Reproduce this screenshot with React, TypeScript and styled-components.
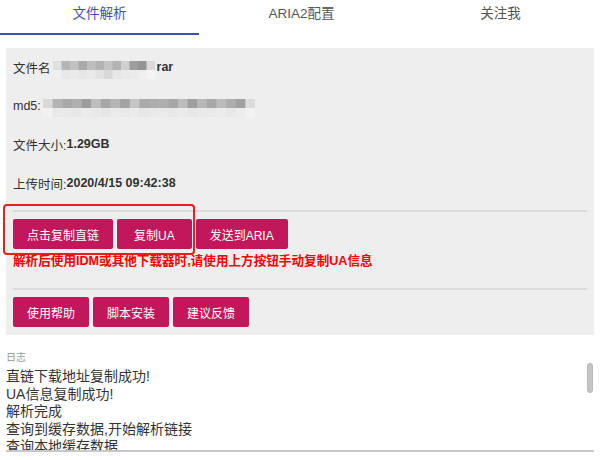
import React from 'react'
import styled, { createGlobalStyle } from 'styled-components'

const GlobalStyle = createGlobalStyle`
  html, body {
    margin: 0;
    padding: 0;
    background: #fff;
  }
  body {
    font-family: "Liberation Sans", "Noto Sans CJK SC", sans-serif;
    color: #333;
  }
`

const Page = styled.div`
  width: 600px;
  height: 460px;
  overflow: hidden;
`

const Tabs = styled.nav`
  display: flex;
  height: 35px;
`

const Tab = styled.div<{ $active?: boolean }>`
  flex: 1;
  display: flex;
  justify-content: center;
  padding-top: 2px;
  box-sizing: border-box;
  font-size: 13.5px;
  color: ${(p) => (p.$active ? '#3f51b5' : '#555')};
  border-bottom: 2px solid ${(p) => (p.$active ? '#3f51b5' : 'transparent')};
  margin-right: ${(p) => (p.$active ? '3px' : '0')};
`

const Panel = styled.section`
  margin: 13px 6px 0;
  padding: 0 7px 8px;
  background: #eeeeee;
`

const InfoRow = styled.div`
  height: 38.6px;
  display: flex;
  align-items: center;
  font-size: 12.5px;
  color: #333;

  b {
    font-weight: bold;
  }
`

const Divider = styled.hr<{ $top: number }>`
  margin: ${(p) => p.$top}px 0 0;
  border: none;
  border-top: 2px solid #dcdcdc;
`

const ButtonRow = styled.div<{ $top: number }>`
  position: relative;
  display: flex;
  gap: 4px;
  margin-top: ${(p) => p.$top}px;
`

const Button = styled.button<{ $pad?: number }>`
  height: 30px;
  padding: 0 ${(p) => p.$pad ?? 14}px;
  border: none;
  border-radius: 2px;
  background: #c2185b;
  color: #fff;
  font-family: inherit;
  font-size: 12px;
  cursor: pointer;
`

const Highlight = styled.div`
  position: absolute;
  left: -10px;
  top: -15px;
  width: 192px;
  height: 51px;
  box-sizing: border-box;
  border: 2px solid #f21b1b;
  border-radius: 4px;
  pointer-events: none;
`

const Warning = styled.p`
  margin: 4px 0 0;
  line-height: 16px;
  font-size: 12.6px;
  font-weight: bold;
  color: #f00;
`

const LogLabel = styled.div`
  margin: 14px 6px 0;
  font-size: 10px;
  color: #999;
`

const LogWrap = styled.div`
  position: relative;
  margin: 4px 6px 0;
`

const LogBox = styled.div`
  height: 82px;
  overflow: hidden;
  border-bottom: 2px solid #c8c8c8;
  font-size: 14px;
  line-height: 17.5px;
  color: #333;
`

const ScrollThumb = styled.div`
  position: absolute;
  right: 1px;
  top: -5px;
  width: 6px;
  height: 30px;
  box-sizing: border-box;
  background: #c4c4c4;
  border: 1px solid #b8b8b8;
  border-radius: 3px;
`

const LogLine = styled.div`
  white-space: nowrap;
`

const Mosaic = ({ width, rows }: { width: number; rows: string[][] }) => {
  const cell = width / rows[0].length
  return (
    <svg width={width} height={rows.length * 9} style={{ display: 'block' }}>
      {rows.map((r, y) =>
        r.map((c, x) => <rect key={`${x}-${y}`} x={x * cell} y={y * 9} width={cell + 0.5} height={9.5} fill={c} />)
      )}
    </svg>
  )
}

const BlurSpot = styled.span<{ $top: number }>`
  display: inline-block;
  margin: ${(p) => p.$top}px 2px 0;
  filter: blur(0.6px);
`

const nameRows = [
  ['#e0e0e0', '#b5b5b5', '#c2c2c2', '#aaaaaa', '#bebebe', '#b3b3b3', '#c4c4c4', '#b3b3b3', '#d0d0d0', '#9e9e9e', '#949494', '#dadada'],
  ['#f0f0f0', '#e8e8e8', '#eaeaea', '#e6e6e6', '#e9e9e9', '#e3e3e3', '#d8d8d8', '#e6e6e6', '#e9e9e9', '#ebebeb', '#efefef', '#f4f4f4'],
]

const md5Rows = [
  ['#d9d9d9', '#b4b4b4', '#a9a9a9', '#b0b0b0', '#9d9d9d', '#bdbdbd', '#a7a7a7', '#b5b5b5', '#a3a3a3', '#c6c6c6', '#aaaaaa', '#adadad', '#b0b0b0', '#a6a6a6', '#bdbdbd', '#9f9f9f', '#b7b7b7', '#a8a8a8', '#bcbcbc', '#adadad', '#a0a0a0', '#dcdcdc'],
  ['#f2f2f2', '#e8e8e8', '#eaeaea', '#e7e7e7', '#ebebeb', '#e9e9e9', '#e6e6e6', '#eaeaea', '#e8e8e8', '#ebebeb', '#e7e7e7', '#e9e9e9', '#eaeaea', '#e8e8e8', '#ebebeb', '#e7e7e7', '#eaeaea', '#e9e9e9', '#ebebeb', '#e8e8e8', '#ededed', '#f2f2f2'],
]

const logs = [
  '直链下载地址复制成功!',
  'UA信息复制成功!',
  '解析完成',
  '查询到缓存数据,开始解析链接',
  '查询本地缓存数据',
  '获取文件信息成功',
]

export default function App() {
  return (
    <Page>
      <GlobalStyle />
      <Tabs>
        <Tab $active>文件解析</Tab>
        <Tab>ARIA2配置</Tab>
        <Tab>关注我</Tab>
      </Tabs>
      <Panel>
        <InfoRow>
          文件名
          <BlurSpot $top={6}>
            <Mosaic width={102} rows={nameRows} />
          </BlurSpot>
          <b>rar</b>
        </InfoRow>
        <InfoRow>
          md5:
          <BlurSpot $top={4}>
            <Mosaic width={212} rows={md5Rows} />
          </BlurSpot>
        </InfoRow>
        <InfoRow>
          文件大小:<b>1.29GB</b>
        </InfoRow>
        <InfoRow>
          上传时间:<b>2020/4/15 09:42:38</b>
        </InfoRow>
        <Divider $top={8} />
        <ButtonRow $top={7}>
          <Button>点击复制直链</Button>
          <Button $pad={17}>复制UA</Button>
          <Button>发送到ARIA</Button>
          <Highlight />
        </ButtonRow>
        <Warning>解析后使用IDM或其他下载器时,请使用上方按钮手动复制UA信息</Warning>
        <Divider $top={19} />
        <ButtonRow $top={7}>
          <Button>使用帮助</Button>
          <Button>脚本安装</Button>
          <Button>建议反馈</Button>
        </ButtonRow>
      </Panel>
      <LogLabel>日志</LogLabel>
      <LogWrap>
        <LogBox>
          {logs.map((l, i) => (
            <LogLine key={i}>{l}</LogLine>
          ))}
        </LogBox>
        <ScrollThumb />
      </LogWrap>
    </Page>
  )
}
